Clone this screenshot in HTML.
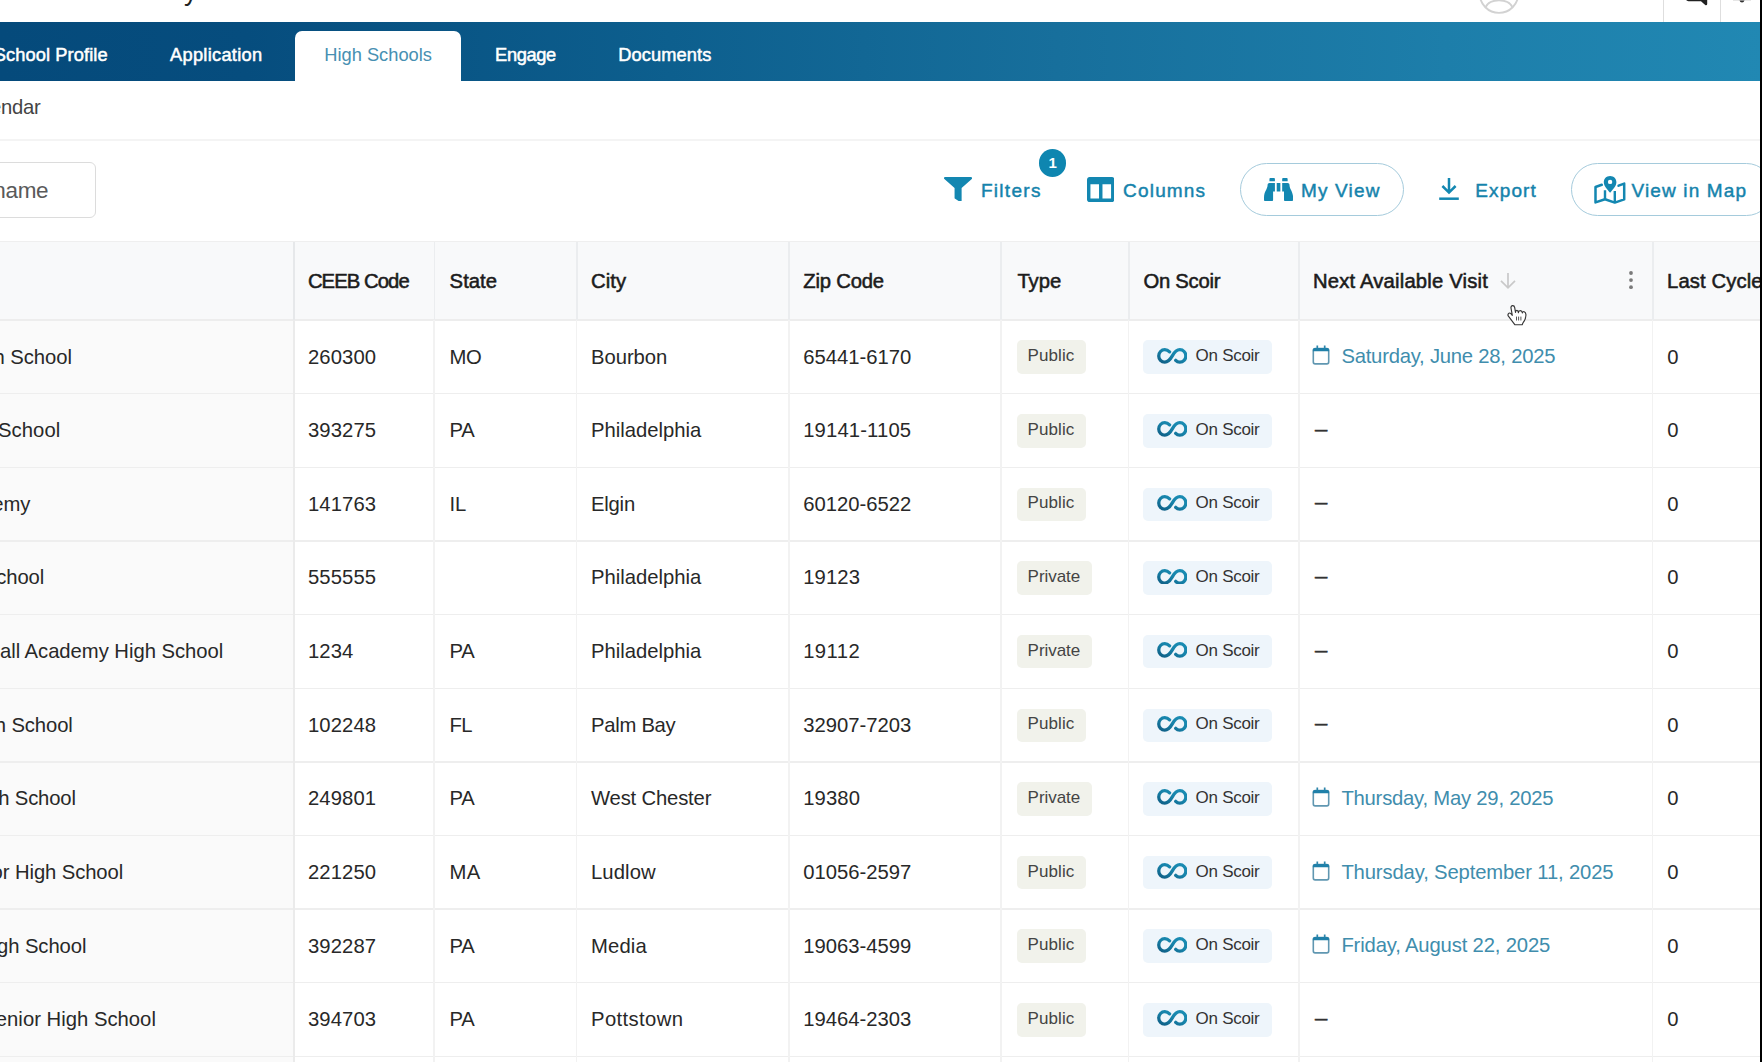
<!DOCTYPE html>
<html lang="en">
<head>
<meta charset="utf-8">
<title>Scoir University - High Schools</title>
<style>
*{box-sizing:border-box}
html,body{margin:0;padding:0}
body{width:1762px;height:1062px;overflow:hidden;position:relative;background:#fff;
  font-family:"Liberation Sans",sans-serif;color:#222}
.ab,.t,.bd,.hl,.vl{position:absolute}
.t{white-space:pre;line-height:1;display:block}
#topbar{position:absolute;left:0;top:0;width:1762px;height:22.6px;background:#fff;overflow:hidden}
#nav{position:absolute;left:0;top:22.45px;width:1762px;height:58.15px;
  background:linear-gradient(90deg,#054a7b 0%,#064d7e 14%,#0d5f8e 38%,#176f9c 60%,#1d7eaa 82%,#2188b3 100%)}
#tab{position:absolute;left:295.3px;top:30.8px;width:166px;height:50px;background:#fff;border-radius:7px 7px 0 0}
#sep{position:absolute;left:0;top:139px;width:1762px;height:1.6px;background:#f4f4f4}
#search{position:absolute;left:-260px;top:162.3px;width:356px;height:56px;border:1.5px solid #dcdcdc;border-radius:6px;background:#fff}
.pill{position:absolute;height:53.4px;top:162.9px;border:1.3px solid #a5cbdc;border-radius:27px;background:#fff}
#thead{position:absolute;left:0;top:240.6px;width:1762px;height:80.2px;background:#f8f9fa;border-top:1.6px solid #efefef}
#pin{position:absolute;left:0;top:320.8px;width:293.5px;height:742px;background:#fafafa}
.hl{left:0;width:1762px;height:1.4px;background:#eeeeee}
.vl{top:320px;width:1.6px;height:742px;background:#f2f2f2}
.vh{position:absolute;top:242px;width:1.6px;height:78px;background:#ebedef}
.bd{height:33.6px;border-radius:5px}
.ty{background:#f1f2eb}
.os{background:#eef5fb}
#edge{position:absolute;left:1760px;top:0;width:2px;height:1062px;background:#000}
#cnt{position:absolute;left:1038.7px;top:149.2px;width:27.8px;height:27.8px;border-radius:50%;background:#0e86b0}
</style>
</head>
<body>
<svg width="0" height="0" style="position:absolute" aria-hidden="true">
  <linearGradient id="ig" x1="0" y1="1" x2="1" y2="0">
    <stop offset="0" stop-color="#0f5f86"/><stop offset="0.55" stop-color="#1784ab"/><stop offset="1" stop-color="#1a8db4"/>
  </linearGradient>
</svg>

<!-- ======= top bar ======= -->
<div id="topbar">
  <svg class="ab" style="left:1478px;top:-27px" width="42" height="42" viewBox="0 0 42 42">
    <circle cx="21" cy="20.6" r="19.3" fill="none" stroke="#d2d2d2" stroke-width="1.9"/>
    <circle cx="21" cy="15" r="7" fill="none" stroke="#cfcfcf" stroke-width="1.6"/>
    <path d="M7.6 34 C10 29.4 15 27.4 21 27.4 C27 27.4 32 29.4 34.4 34" fill="none" stroke="#d2d2d2" stroke-width="1.9"/>
  </svg>
  <div class="ab" style="left:1663px;top:0;width:1.4px;height:23px;background:#dedede"></div>
  <div class="ab" style="left:1720px;top:0;width:1.4px;height:23px;background:#dedede"></div>
  <svg class="ab" style="left:1684px;top:-18px" width="26" height="24" viewBox="0 0 26 24">
    <path d="M4.6 0 H20 A2 2 0 0 1 22 2 V22 L17.5 18 H4.6 A2 2 0 0 1 2.8 16 V2 A2 2 0 0 1 4.6 0 Z" fill="none" stroke="#222" stroke-width="2.4" stroke-linejoin="round"/>
    <path d="M16.5 17.5 L22.6 22.9 V16 Z" fill="#222"/>
  </svg>
  <svg class="ab" style="left:1733px;top:-1px" width="18" height="6" viewBox="0 0 18 6">
    <rect x="0" y="0" width="18" height="1.6" fill="#d5d5d5"/>
    <path d="M6.5 1.5 A2.6 2.6 0 0 0 11.5 1.5 Z" fill="#333"/>
  </svg>
</div>

<!-- ======= nav ======= -->
<div id="nav"></div>
<div id="tab"></div>
<div id="sep"></div>

<!-- ======= toolbar ======= -->
<div id="search"></div>
<!-- filter icon -->
<svg class="ab" style="left:943.8px;top:176.6px" width="28.2" height="24.8" viewBox="0 0 512 512" preserveAspectRatio="none">
  <path fill="#1387b1" d="M487.976 0H24.028C2.71 0-8.047 25.866 7.058 40.971L192 225.941V432c0 7.831 3.821 15.17 10.237 19.662l80 55.98C298.02 518.69 320 507.493 320 487.98V225.941l184.947-184.97C520.021 25.896 509.338 0 487.976 0z"/>
</svg>
<div id="cnt"></div>
<!-- columns icon -->
<svg class="ab" style="left:1086.7px;top:176.7px" width="27.5" height="25.2" viewBox="0 32 512 448" preserveAspectRatio="none">
  <path fill="#1387b1" d="M464 32H48C21.49 32 0 53.49 0 80v352c0 26.51 21.49 48 48 48h416c26.51 0 48-21.49 48-48V80c0-26.51-21.49-48-48-48zM224 416H64V160h160v256zm224 0H288V160h160v256z"/>
</svg>
<!-- My View pill -->
<div class="pill" style="left:1240.2px;width:164.2px"></div>
<svg class="ab" style="left:1263.7px;top:177.6px" width="29.1" height="23.5" viewBox="0 32 512 448" preserveAspectRatio="none">
  <path fill="#1387b1" d="M416 48c0-8.84-7.16-16-16-16h-64c-8.84 0-16 7.16-16 16v48h96V48zM63.91 159.99C61.4 253.84 3.46 274.22 0 404v44c0 17.67 14.33 32 32 32h96c17.67 0 32-14.33 32-32V288h32V128H95.84c-17.63 0-31.45 14.37-31.93 31.99zm384.18 0c-.48-17.62-14.3-31.99-31.93-31.99H320v160h32v160c0 17.67 14.33 32 32 32h96c17.67 0 32-14.33 32-32v-44c-3.46-129.78-61.4-150.16-63.91-244.01zM176 32h-64c-8.84 0-16 7.16-16 16v48h96V48c0-8.84-7.16-16-16-16zm48 256h64V128h-64v160z"/>
</svg>
<!-- export icon -->
<svg class="ab" style="left:1437.6px;top:177.4px" width="22" height="24" viewBox="0 0 22 24">
  <path d="M11 1 V15.4 M4.4 9 L11 15.6 L17.6 9" fill="none" stroke="#1387b1" stroke-width="2.5" stroke-linejoin="miter"/>
  <path d="M1.2 21.7 H20.8" stroke="#1387b1" stroke-width="2.5"/>
</svg>
<!-- View in Map pill -->
<div class="pill" style="left:1570.8px;width:202px"></div>
<svg class="ab" style="left:1593.4px;top:174.6px" width="34" height="30" viewBox="0 0 34 30">
  <path d="M8.8 9.8 L2.5 12 V27.4 L12 24.2 L21.8 27.6 L31.2 24.4 V8.6 L25.6 10.7" fill="none" stroke="#1387b1" stroke-width="2.5" stroke-linejoin="round" stroke-linecap="round"/>
  <path d="M12 15.2 V24.2 M21.8 16 V27.2" fill="none" stroke="#1387b1" stroke-width="2.4"/>
  <path d="M17.1 1 C13.3 1 10.8 3.8 10.8 7.2 C10.8 10.8 14 14 17.1 17.8 C20.2 14 23.4 10.8 23.4 7.2 C23.4 3.8 20.9 1 17.1 1 Z M17.1 4.7 A2.2 2.2 0 1 1 17.1 9.1 A2.2 2.2 0 1 1 17.1 4.7 Z" fill="#1387b1" fill-rule="evenodd"/>
</svg>

<!-- ======= table ======= -->
<div id="thead"></div>
<div id="pin"></div>
<div class="hl" style="top:319.3px;background:#ededed"></div>
<div class="bd ty" style="left:1017px;top:340.40px;width:69.0px"></div>
<div class="bd os" style="left:1143.3px;top:340.40px;width:128.5px"></div>
<svg class="ab" style="left:1156.9px;top:347.75px" width="30.6" height="15.8" viewBox="0 0 30.6 16.3" preserveAspectRatio="none"><path d="M12.6 3.9 C11.3 2.6 9.7 1.75 7.8 1.75 C4.4 1.75 1.75 4.6 1.75 8.15 C1.75 11.7 4.4 14.55 7.8 14.55 C11 14.55 13 12.3 15.3 8.15 C17.6 4 19.6 1.75 22.8 1.75 C26.2 1.75 28.85 4.6 28.85 8.15 C28.85 11.7 26.2 14.55 22.8 14.55 C21.2 14.55 19.8 13.9 18.7 12.7" fill="none" stroke="url(#ig)" stroke-width="3.3" stroke-linecap="round"/></svg>
<svg class="ab" style="left:1312.0px;top:345.40px" width="18" height="20" viewBox="0 0 18 20"><path d="M3.1 3.5 H14.9 A1.8 1.8 0 0 1 16.7 5.3 V17.1 A1.8 1.8 0 0 1 14.9 18.9 H3.1 A1.8 1.8 0 0 1 1.3 17.1 V5.3 A1.8 1.8 0 0 1 3.1 3.5 Z" fill="none" stroke="#6097b1" stroke-width="1.6"/><path d="M0.9 6.3 V5.1 A2 2 0 0 1 2.9 3.1 H15.1 A2 2 0 0 1 17.1 5.1 V6.3 Z" fill="#1f80a9"/><path d="M5.3 0.4 V3.4 M12.7 0.4 V3.4" stroke="#2f86ab" stroke-width="1.7"/></svg>
<div class="hl" style="top:393.02px"></div>
<div class="bd ty" style="left:1017px;top:414.02px;width:69.0px"></div>
<div class="bd os" style="left:1143.3px;top:414.02px;width:128.5px"></div>
<svg class="ab" style="left:1156.9px;top:421.37px" width="30.6" height="15.8" viewBox="0 0 30.6 16.3" preserveAspectRatio="none"><path d="M12.6 3.9 C11.3 2.6 9.7 1.75 7.8 1.75 C4.4 1.75 1.75 4.6 1.75 8.15 C1.75 11.7 4.4 14.55 7.8 14.55 C11 14.55 13 12.3 15.3 8.15 C17.6 4 19.6 1.75 22.8 1.75 C26.2 1.75 28.85 4.6 28.85 8.15 C28.85 11.7 26.2 14.55 22.8 14.55 C21.2 14.55 19.8 13.9 18.7 12.7" fill="none" stroke="url(#ig)" stroke-width="3.3" stroke-linecap="round"/></svg>
<div class="hl" style="top:466.64px"></div>
<div class="bd ty" style="left:1017px;top:487.64px;width:69.0px"></div>
<div class="bd os" style="left:1143.3px;top:487.64px;width:128.5px"></div>
<svg class="ab" style="left:1156.9px;top:494.99px" width="30.6" height="15.8" viewBox="0 0 30.6 16.3" preserveAspectRatio="none"><path d="M12.6 3.9 C11.3 2.6 9.7 1.75 7.8 1.75 C4.4 1.75 1.75 4.6 1.75 8.15 C1.75 11.7 4.4 14.55 7.8 14.55 C11 14.55 13 12.3 15.3 8.15 C17.6 4 19.6 1.75 22.8 1.75 C26.2 1.75 28.85 4.6 28.85 8.15 C28.85 11.7 26.2 14.55 22.8 14.55 C21.2 14.55 19.8 13.9 18.7 12.7" fill="none" stroke="url(#ig)" stroke-width="3.3" stroke-linecap="round"/></svg>
<div class="hl" style="top:540.26px"></div>
<div class="bd ty" style="left:1017px;top:561.26px;width:74.5px"></div>
<div class="bd os" style="left:1143.3px;top:561.26px;width:128.5px"></div>
<svg class="ab" style="left:1156.9px;top:568.61px" width="30.6" height="15.8" viewBox="0 0 30.6 16.3" preserveAspectRatio="none"><path d="M12.6 3.9 C11.3 2.6 9.7 1.75 7.8 1.75 C4.4 1.75 1.75 4.6 1.75 8.15 C1.75 11.7 4.4 14.55 7.8 14.55 C11 14.55 13 12.3 15.3 8.15 C17.6 4 19.6 1.75 22.8 1.75 C26.2 1.75 28.85 4.6 28.85 8.15 C28.85 11.7 26.2 14.55 22.8 14.55 C21.2 14.55 19.8 13.9 18.7 12.7" fill="none" stroke="url(#ig)" stroke-width="3.3" stroke-linecap="round"/></svg>
<div class="hl" style="top:613.88px"></div>
<div class="bd ty" style="left:1017px;top:634.88px;width:74.5px"></div>
<div class="bd os" style="left:1143.3px;top:634.88px;width:128.5px"></div>
<svg class="ab" style="left:1156.9px;top:642.23px" width="30.6" height="15.8" viewBox="0 0 30.6 16.3" preserveAspectRatio="none"><path d="M12.6 3.9 C11.3 2.6 9.7 1.75 7.8 1.75 C4.4 1.75 1.75 4.6 1.75 8.15 C1.75 11.7 4.4 14.55 7.8 14.55 C11 14.55 13 12.3 15.3 8.15 C17.6 4 19.6 1.75 22.8 1.75 C26.2 1.75 28.85 4.6 28.85 8.15 C28.85 11.7 26.2 14.55 22.8 14.55 C21.2 14.55 19.8 13.9 18.7 12.7" fill="none" stroke="url(#ig)" stroke-width="3.3" stroke-linecap="round"/></svg>
<div class="hl" style="top:687.50px"></div>
<div class="bd ty" style="left:1017px;top:708.50px;width:69.0px"></div>
<div class="bd os" style="left:1143.3px;top:708.50px;width:128.5px"></div>
<svg class="ab" style="left:1156.9px;top:715.85px" width="30.6" height="15.8" viewBox="0 0 30.6 16.3" preserveAspectRatio="none"><path d="M12.6 3.9 C11.3 2.6 9.7 1.75 7.8 1.75 C4.4 1.75 1.75 4.6 1.75 8.15 C1.75 11.7 4.4 14.55 7.8 14.55 C11 14.55 13 12.3 15.3 8.15 C17.6 4 19.6 1.75 22.8 1.75 C26.2 1.75 28.85 4.6 28.85 8.15 C28.85 11.7 26.2 14.55 22.8 14.55 C21.2 14.55 19.8 13.9 18.7 12.7" fill="none" stroke="url(#ig)" stroke-width="3.3" stroke-linecap="round"/></svg>
<div class="hl" style="top:761.12px"></div>
<div class="bd ty" style="left:1017px;top:782.12px;width:74.5px"></div>
<div class="bd os" style="left:1143.3px;top:782.12px;width:128.5px"></div>
<svg class="ab" style="left:1156.9px;top:789.47px" width="30.6" height="15.8" viewBox="0 0 30.6 16.3" preserveAspectRatio="none"><path d="M12.6 3.9 C11.3 2.6 9.7 1.75 7.8 1.75 C4.4 1.75 1.75 4.6 1.75 8.15 C1.75 11.7 4.4 14.55 7.8 14.55 C11 14.55 13 12.3 15.3 8.15 C17.6 4 19.6 1.75 22.8 1.75 C26.2 1.75 28.85 4.6 28.85 8.15 C28.85 11.7 26.2 14.55 22.8 14.55 C21.2 14.55 19.8 13.9 18.7 12.7" fill="none" stroke="url(#ig)" stroke-width="3.3" stroke-linecap="round"/></svg>
<svg class="ab" style="left:1312.0px;top:787.12px" width="18" height="20" viewBox="0 0 18 20"><path d="M3.1 3.5 H14.9 A1.8 1.8 0 0 1 16.7 5.3 V17.1 A1.8 1.8 0 0 1 14.9 18.9 H3.1 A1.8 1.8 0 0 1 1.3 17.1 V5.3 A1.8 1.8 0 0 1 3.1 3.5 Z" fill="none" stroke="#6097b1" stroke-width="1.6"/><path d="M0.9 6.3 V5.1 A2 2 0 0 1 2.9 3.1 H15.1 A2 2 0 0 1 17.1 5.1 V6.3 Z" fill="#1f80a9"/><path d="M5.3 0.4 V3.4 M12.7 0.4 V3.4" stroke="#2f86ab" stroke-width="1.7"/></svg>
<div class="hl" style="top:834.74px"></div>
<div class="bd ty" style="left:1017px;top:855.74px;width:69.0px"></div>
<div class="bd os" style="left:1143.3px;top:855.74px;width:128.5px"></div>
<svg class="ab" style="left:1156.9px;top:863.09px" width="30.6" height="15.8" viewBox="0 0 30.6 16.3" preserveAspectRatio="none"><path d="M12.6 3.9 C11.3 2.6 9.7 1.75 7.8 1.75 C4.4 1.75 1.75 4.6 1.75 8.15 C1.75 11.7 4.4 14.55 7.8 14.55 C11 14.55 13 12.3 15.3 8.15 C17.6 4 19.6 1.75 22.8 1.75 C26.2 1.75 28.85 4.6 28.85 8.15 C28.85 11.7 26.2 14.55 22.8 14.55 C21.2 14.55 19.8 13.9 18.7 12.7" fill="none" stroke="url(#ig)" stroke-width="3.3" stroke-linecap="round"/></svg>
<svg class="ab" style="left:1312.0px;top:860.74px" width="18" height="20" viewBox="0 0 18 20"><path d="M3.1 3.5 H14.9 A1.8 1.8 0 0 1 16.7 5.3 V17.1 A1.8 1.8 0 0 1 14.9 18.9 H3.1 A1.8 1.8 0 0 1 1.3 17.1 V5.3 A1.8 1.8 0 0 1 3.1 3.5 Z" fill="none" stroke="#6097b1" stroke-width="1.6"/><path d="M0.9 6.3 V5.1 A2 2 0 0 1 2.9 3.1 H15.1 A2 2 0 0 1 17.1 5.1 V6.3 Z" fill="#1f80a9"/><path d="M5.3 0.4 V3.4 M12.7 0.4 V3.4" stroke="#2f86ab" stroke-width="1.7"/></svg>
<div class="hl" style="top:908.36px"></div>
<div class="bd ty" style="left:1017px;top:929.36px;width:69.0px"></div>
<div class="bd os" style="left:1143.3px;top:929.36px;width:128.5px"></div>
<svg class="ab" style="left:1156.9px;top:936.71px" width="30.6" height="15.8" viewBox="0 0 30.6 16.3" preserveAspectRatio="none"><path d="M12.6 3.9 C11.3 2.6 9.7 1.75 7.8 1.75 C4.4 1.75 1.75 4.6 1.75 8.15 C1.75 11.7 4.4 14.55 7.8 14.55 C11 14.55 13 12.3 15.3 8.15 C17.6 4 19.6 1.75 22.8 1.75 C26.2 1.75 28.85 4.6 28.85 8.15 C28.85 11.7 26.2 14.55 22.8 14.55 C21.2 14.55 19.8 13.9 18.7 12.7" fill="none" stroke="url(#ig)" stroke-width="3.3" stroke-linecap="round"/></svg>
<svg class="ab" style="left:1312.0px;top:934.36px" width="18" height="20" viewBox="0 0 18 20"><path d="M3.1 3.5 H14.9 A1.8 1.8 0 0 1 16.7 5.3 V17.1 A1.8 1.8 0 0 1 14.9 18.9 H3.1 A1.8 1.8 0 0 1 1.3 17.1 V5.3 A1.8 1.8 0 0 1 3.1 3.5 Z" fill="none" stroke="#6097b1" stroke-width="1.6"/><path d="M0.9 6.3 V5.1 A2 2 0 0 1 2.9 3.1 H15.1 A2 2 0 0 1 17.1 5.1 V6.3 Z" fill="#1f80a9"/><path d="M5.3 0.4 V3.4 M12.7 0.4 V3.4" stroke="#2f86ab" stroke-width="1.7"/></svg>
<div class="hl" style="top:981.98px"></div>
<div class="bd ty" style="left:1017px;top:1002.98px;width:69.0px"></div>
<div class="bd os" style="left:1143.3px;top:1002.98px;width:128.5px"></div>
<svg class="ab" style="left:1156.9px;top:1010.33px" width="30.6" height="15.8" viewBox="0 0 30.6 16.3" preserveAspectRatio="none"><path d="M12.6 3.9 C11.3 2.6 9.7 1.75 7.8 1.75 C4.4 1.75 1.75 4.6 1.75 8.15 C1.75 11.7 4.4 14.55 7.8 14.55 C11 14.55 13 12.3 15.3 8.15 C17.6 4 19.6 1.75 22.8 1.75 C26.2 1.75 28.85 4.6 28.85 8.15 C28.85 11.7 26.2 14.55 22.8 14.55 C21.2 14.55 19.8 13.9 18.7 12.7" fill="none" stroke="url(#ig)" stroke-width="3.3" stroke-linecap="round"/></svg>
<div class="hl" style="top:1055.60px"></div>
<div class="vl" style="left:292.7px;width:2px;background:#ebebeb"></div><div class="vh" style="left:292.7px;width:2px;background:#e6e8ea"></div>
<div class="vl" style="left:433.3px"></div><div class="vh" style="left:433.5px"></div>
<div class="vl" style="left:575.8px"></div><div class="vh" style="left:576.0px"></div>
<div class="vl" style="left:788.0px"></div><div class="vh" style="left:788.2px"></div>
<div class="vl" style="left:1000.1px"></div><div class="vh" style="left:1000.3px"></div>
<div class="vl" style="left:1127.9px"></div><div class="vh" style="left:1128.1px"></div>
<div class="vl" style="left:1298.1px"></div><div class="vh" style="left:1298.3px"></div>
<div class="vl" style="left:1651.9px"></div><div class="vh" style="left:1652.1px"></div>

<!-- sort arrow -->
<svg class="ab" style="left:1499.4px;top:272px" width="18" height="18" viewBox="0 0 18 18">
  <path d="M9 1 V15.6 M2 8.8 L9 15.8 L16 8.8" fill="none" stroke="#c9c9c9" stroke-width="1.7"/>
</svg>
<!-- column menu dots -->
<svg class="ab" style="left:1627.6px;top:270.4px" width="6" height="21" viewBox="0 0 6 21">
  <circle cx="3" cy="3" r="1.9" fill="#7a7a7a"/><circle cx="3" cy="10.1" r="1.9" fill="#7a7a7a"/><circle cx="3" cy="17.2" r="1.9" fill="#7a7a7a"/>
</svg>

<span class="t" style="top:-22.50px;font-size:27px;color:#222;letter-spacing:-0.131px;right:1564.53px;">Scoir University</span>
<span class="t" style="top:46.38px;font-size:18.25px;color:#fff;letter-spacing:0.095px;-webkit-text-stroke:0.5px #fff;right:1654.31px;">School Profile</span>
<span class="t" style="top:46.38px;font-size:18.25px;color:#fff;letter-spacing:0.281px;-webkit-text-stroke:0.5px #fff;left:170.00px;">Application</span>
<span class="t" style="top:46.35px;font-size:18.3px;color:#4790b2;letter-spacing:-0.010px;left:324.30px;">High Schools</span>
<span class="t" style="top:46.38px;font-size:18.25px;color:#fff;letter-spacing:-0.357px;-webkit-text-stroke:0.5px #fff;left:495.10px;">Engage</span>
<span class="t" style="top:46.38px;font-size:18.25px;color:#fff;letter-spacing:0.104px;-webkit-text-stroke:0.5px #fff;left:618.20px;">Documents</span>
<span class="t" style="top:96.88px;font-size:20.25px;color:#444;letter-spacing:-0.230px;right:1721.43px;">Calendar</span>
<span class="t" style="top:180.25px;font-size:22.5px;color:#5a5a5a;letter-spacing:-0.291px;right:1713.69px;">Search by name</span>
<span class="t" style="top:181.00px;font-size:19.0px;color:#1583ac;letter-spacing:1.304px;-webkit-text-stroke:0.45px #1583ac;left:980.90px;">Filters</span>
<span class="t" style="top:181.00px;font-size:19.0px;color:#1583ac;letter-spacing:1.174px;-webkit-text-stroke:0.45px #1583ac;left:1123.10px;">Columns</span>
<span class="t" style="top:181.00px;font-size:19.0px;color:#1583ac;letter-spacing:1.183px;-webkit-text-stroke:0.45px #1583ac;left:1300.90px;">My View</span>
<span class="t" style="top:181.00px;font-size:19.0px;color:#1583ac;letter-spacing:1.156px;-webkit-text-stroke:0.45px #1583ac;left:1475.20px;">Export</span>
<span class="t" style="top:181.00px;font-size:19.0px;color:#1583ac;letter-spacing:1.158px;-webkit-text-stroke:0.45px #1583ac;left:1631.40px;">View in Map</span>
<span class="t" style="top:270.88px;font-size:20.25px;color:#1c1c1c;letter-spacing:-0.922px;-webkit-text-stroke:0.55px #1c1c1c;left:307.90px;">CEEB Code</span>
<span class="t" style="top:270.88px;font-size:20.25px;color:#1c1c1c;letter-spacing:0.044px;-webkit-text-stroke:0.55px #1c1c1c;left:449.60px;">State</span>
<span class="t" style="top:270.88px;font-size:20.25px;color:#1c1c1c;letter-spacing:0.043px;-webkit-text-stroke:0.55px #1c1c1c;left:591.00px;">City</span>
<span class="t" style="top:270.88px;font-size:20.25px;color:#1c1c1c;letter-spacing:-0.176px;-webkit-text-stroke:0.55px #1c1c1c;left:803.20px;">Zip Code</span>
<span class="t" style="top:270.88px;font-size:20.25px;color:#1c1c1c;letter-spacing:-0.039px;-webkit-text-stroke:0.55px #1c1c1c;left:1017.40px;">Type</span>
<span class="t" style="top:270.88px;font-size:20.25px;color:#1c1c1c;letter-spacing:-0.234px;-webkit-text-stroke:0.55px #1c1c1c;left:1143.40px;">On Scoir</span>
<span class="t" style="top:270.88px;font-size:20.25px;color:#1c1c1c;letter-spacing:0.184px;-webkit-text-stroke:0.55px #1c1c1c;left:1312.90px;">Next Available Visit</span>
<span class="t" style="top:270.88px;font-size:20.25px;color:#1c1c1c;letter-spacing:0.117px;-webkit-text-stroke:0.55px #1c1c1c;left:1667.00px;">Last Cycle Applicants</span>
<span class="t" style="top:346.88px;font-size:20.25px;color:#282828;letter-spacing:-0.071px;right:1690.17px;">Bourbon High School</span>
<span class="t" style="top:346.88px;font-size:20.25px;color:#282828;letter-spacing:0.120px;left:307.90px;">260300</span>
<span class="t" style="top:346.88px;font-size:20.25px;color:#282828;letter-spacing:-0.500px;left:449.60px;">MO</span>
<span class="t" style="top:346.88px;font-size:20.25px;color:#282828;letter-spacing:-0.038px;left:591.00px;">Bourbon</span>
<span class="t" style="top:346.88px;font-size:20.25px;color:#282828;letter-spacing:-0.008px;left:803.20px;">65441-6170</span>
<span class="t" style="top:347.00px;font-size:17px;color:#444;letter-spacing:0.083px;left:1027.60px;">Public</span>
<span class="t" style="top:347.00px;font-size:17px;color:#333;letter-spacing:-0.281px;left:1195.60px;">On Scoir</span>
<span class="t" style="top:345.88px;font-size:20.25px;color:#408dad;letter-spacing:-0.230px;left:1341.40px;">Saturday, June 28, 2025</span>
<span class="t" style="top:346.88px;font-size:20.25px;color:#282828;letter-spacing:0.125px;left:1667.30px;">0</span>
<span class="t" style="top:419.88px;font-size:20.25px;color:#282828;letter-spacing:0.052px;right:1701.75px;">Northeast High School</span>
<span class="t" style="top:419.88px;font-size:20.25px;color:#282828;letter-spacing:0.120px;left:307.90px;">393275</span>
<span class="t" style="top:419.88px;font-size:20.25px;color:#282828;letter-spacing:-0.445px;left:449.60px;">PA</span>
<span class="t" style="top:419.88px;font-size:20.25px;color:#282828;left:591.00px;">Philadelphia</span>
<span class="t" style="top:419.88px;font-size:20.25px;color:#282828;letter-spacing:0.142px;left:803.20px;">19141-1105</span>
<span class="t" style="top:421.00px;font-size:17px;color:#444;letter-spacing:0.083px;left:1027.60px;">Public</span>
<span class="t" style="top:421.00px;font-size:17px;color:#333;letter-spacing:-0.281px;left:1195.60px;">On Scoir</span>
<span class="t" style="top:419.00px;font-size:20px;color:#333;-webkit-text-stroke:0.5px #333;left:1314.70px;transform:scaleX(1.106);transform-origin:0 50%;">–</span>
<span class="t" style="top:419.88px;font-size:20.25px;color:#282828;letter-spacing:0.125px;left:1667.30px;">0</span>
<span class="t" style="top:493.88px;font-size:20.25px;color:#282828;letter-spacing:-0.082px;right:1731.68px;">Elgin Math and Science Academy</span>
<span class="t" style="top:493.88px;font-size:20.25px;color:#282828;letter-spacing:0.120px;left:307.90px;">141763</span>
<span class="t" style="top:493.88px;font-size:20.25px;color:#282828;letter-spacing:-0.234px;left:449.60px;">IL</span>
<span class="t" style="top:493.88px;font-size:20.25px;color:#282828;letter-spacing:-0.222px;left:591.00px;">Elgin</span>
<span class="t" style="top:493.88px;font-size:20.25px;color:#282828;letter-spacing:-0.008px;left:803.20px;">60120-6522</span>
<span class="t" style="top:494.00px;font-size:17px;color:#444;letter-spacing:0.083px;left:1027.60px;">Public</span>
<span class="t" style="top:494.00px;font-size:17px;color:#333;letter-spacing:-0.281px;left:1195.60px;">On Scoir</span>
<span class="t" style="top:492.00px;font-size:20px;color:#333;-webkit-text-stroke:0.5px #333;left:1314.70px;transform:scaleX(1.106);transform-origin:0 50%;">–</span>
<span class="t" style="top:493.88px;font-size:20.25px;color:#282828;letter-spacing:0.125px;left:1667.30px;">0</span>
<span class="t" style="top:566.88px;font-size:20.25px;color:#282828;letter-spacing:-0.116px;right:1717.92px;">Scoir Demo High School</span>
<span class="t" style="top:566.88px;font-size:20.25px;color:#282828;letter-spacing:0.120px;left:307.90px;">555555</span>
<span class="t" style="top:566.88px;font-size:20.25px;color:#282828;left:591.00px;">Philadelphia</span>
<span class="t" style="top:566.88px;font-size:20.25px;color:#282828;letter-spacing:0.119px;left:803.20px;">19123</span>
<span class="t" style="top:568.00px;font-size:17px;color:#444;letter-spacing:-0.051px;left:1027.60px;">Private</span>
<span class="t" style="top:568.00px;font-size:17px;color:#333;letter-spacing:-0.281px;left:1195.60px;">On Scoir</span>
<span class="t" style="top:566.00px;font-size:20px;color:#333;-webkit-text-stroke:0.5px #333;left:1314.70px;transform:scaleX(1.106);transform-origin:0 50%;">–</span>
<span class="t" style="top:566.88px;font-size:20.25px;color:#282828;letter-spacing:0.125px;left:1667.30px;">0</span>
<span class="t" style="top:640.88px;font-size:20.25px;color:#282828;letter-spacing:-0.034px;right:1538.83px;">Scoir Hall Academy High School</span>
<span class="t" style="top:640.88px;font-size:20.25px;color:#282828;letter-spacing:0.117px;left:307.90px;">1234</span>
<span class="t" style="top:640.88px;font-size:20.25px;color:#282828;letter-spacing:-0.445px;left:449.60px;">PA</span>
<span class="t" style="top:640.88px;font-size:20.25px;color:#282828;left:591.00px;">Philadelphia</span>
<span class="t" style="top:640.88px;font-size:20.25px;color:#282828;letter-spacing:0.419px;left:803.20px;">19112</span>
<span class="t" style="top:642.00px;font-size:17px;color:#444;letter-spacing:-0.051px;left:1027.60px;">Private</span>
<span class="t" style="top:642.00px;font-size:17px;color:#333;letter-spacing:-0.281px;left:1195.60px;">On Scoir</span>
<span class="t" style="top:640.00px;font-size:20px;color:#333;-webkit-text-stroke:0.5px #333;left:1314.70px;transform:scaleX(1.106);transform-origin:0 50%;">–</span>
<span class="t" style="top:640.88px;font-size:20.25px;color:#282828;letter-spacing:0.125px;left:1667.30px;">0</span>
<span class="t" style="top:714.88px;font-size:20.25px;color:#282828;letter-spacing:-0.104px;right:1689.30px;">Palm Bay Magnet High School</span>
<span class="t" style="top:714.88px;font-size:20.25px;color:#282828;letter-spacing:0.120px;left:307.90px;">102248</span>
<span class="t" style="top:714.88px;font-size:20.25px;color:#282828;letter-spacing:-0.766px;left:449.60px;">FL</span>
<span class="t" style="top:714.88px;font-size:20.25px;color:#282828;letter-spacing:-0.275px;left:591.00px;">Palm Bay</span>
<span class="t" style="top:714.88px;font-size:20.25px;color:#282828;letter-spacing:-0.008px;left:803.20px;">32907-7203</span>
<span class="t" style="top:715.00px;font-size:17px;color:#444;letter-spacing:0.083px;left:1027.60px;">Public</span>
<span class="t" style="top:715.00px;font-size:17px;color:#333;letter-spacing:-0.281px;left:1195.60px;">On Scoir</span>
<span class="t" style="top:713.00px;font-size:20px;color:#333;-webkit-text-stroke:0.5px #333;left:1314.70px;transform:scaleX(1.106);transform-origin:0 50%;">–</span>
<span class="t" style="top:714.88px;font-size:20.25px;color:#282828;letter-spacing:0.125px;left:1667.30px;">0</span>
<span class="t" style="top:787.88px;font-size:20.25px;color:#282828;letter-spacing:-0.161px;right:1686.26px;">West Chester East High School</span>
<span class="t" style="top:787.88px;font-size:20.25px;color:#282828;letter-spacing:0.120px;left:307.90px;">249801</span>
<span class="t" style="top:787.88px;font-size:20.25px;color:#282828;letter-spacing:-0.445px;left:449.60px;">PA</span>
<span class="t" style="top:787.88px;font-size:20.25px;color:#282828;letter-spacing:-0.171px;left:591.00px;">West Chester</span>
<span class="t" style="top:787.88px;font-size:20.25px;color:#282828;letter-spacing:0.119px;left:803.20px;">19380</span>
<span class="t" style="top:789.00px;font-size:17px;color:#444;letter-spacing:-0.051px;left:1027.60px;">Private</span>
<span class="t" style="top:789.00px;font-size:17px;color:#333;letter-spacing:-0.281px;left:1195.60px;">On Scoir</span>
<span class="t" style="top:787.88px;font-size:20.25px;color:#408dad;letter-spacing:-0.222px;left:1341.40px;">Thursday, May 29, 2025</span>
<span class="t" style="top:787.88px;font-size:20.25px;color:#282828;letter-spacing:0.125px;left:1667.30px;">0</span>
<span class="t" style="top:861.88px;font-size:20.25px;color:#282828;letter-spacing:-0.094px;right:1638.89px;">Ludlow Senior High School</span>
<span class="t" style="top:861.88px;font-size:20.25px;color:#282828;letter-spacing:0.120px;left:307.90px;">221250</span>
<span class="t" style="top:861.88px;font-size:20.25px;color:#282828;letter-spacing:0.352px;left:449.60px;">MA</span>
<span class="t" style="top:861.88px;font-size:20.25px;color:#282828;letter-spacing:0.096px;left:591.00px;">Ludlow</span>
<span class="t" style="top:861.88px;font-size:20.25px;color:#282828;letter-spacing:-0.008px;left:803.20px;">01056-2597</span>
<span class="t" style="top:863.00px;font-size:17px;color:#444;letter-spacing:0.083px;left:1027.60px;">Public</span>
<span class="t" style="top:863.00px;font-size:17px;color:#333;letter-spacing:-0.281px;left:1195.60px;">On Scoir</span>
<span class="t" style="top:861.88px;font-size:20.25px;color:#408dad;letter-spacing:-0.146px;left:1341.40px;">Thursday, September 11, 2025</span>
<span class="t" style="top:861.88px;font-size:20.25px;color:#282828;letter-spacing:0.125px;left:1667.30px;">0</span>
<span class="t" style="top:935.88px;font-size:20.25px;color:#282828;letter-spacing:-0.068px;right:1675.57px;">Penncrest High School</span>
<span class="t" style="top:935.88px;font-size:20.25px;color:#282828;letter-spacing:0.120px;left:307.90px;">392287</span>
<span class="t" style="top:935.88px;font-size:20.25px;color:#282828;letter-spacing:-0.445px;left:449.60px;">PA</span>
<span class="t" style="top:935.88px;font-size:20.25px;color:#282828;letter-spacing:0.125px;left:591.00px;">Media</span>
<span class="t" style="top:935.88px;font-size:20.25px;color:#282828;letter-spacing:-0.008px;left:803.20px;">19063-4599</span>
<span class="t" style="top:936.00px;font-size:17px;color:#444;letter-spacing:0.083px;left:1027.60px;">Public</span>
<span class="t" style="top:936.00px;font-size:17px;color:#333;letter-spacing:-0.281px;left:1195.60px;">On Scoir</span>
<span class="t" style="top:934.88px;font-size:20.25px;color:#408dad;letter-spacing:-0.159px;left:1341.40px;">Friday, August 22, 2025</span>
<span class="t" style="top:935.88px;font-size:20.25px;color:#282828;letter-spacing:0.125px;left:1667.30px;">0</span>
<span class="t" style="top:1008.88px;font-size:20.25px;color:#282828;letter-spacing:0.015px;right:1606.09px;">Pottstown Senior High School</span>
<span class="t" style="top:1008.88px;font-size:20.25px;color:#282828;letter-spacing:0.120px;left:307.90px;">394703</span>
<span class="t" style="top:1008.88px;font-size:20.25px;color:#282828;letter-spacing:-0.445px;left:449.60px;">PA</span>
<span class="t" style="top:1008.88px;font-size:20.25px;color:#282828;letter-spacing:0.373px;left:591.00px;">Pottstown</span>
<span class="t" style="top:1008.88px;font-size:20.25px;color:#282828;letter-spacing:-0.008px;left:803.20px;">19464-2303</span>
<span class="t" style="top:1010.00px;font-size:17px;color:#444;letter-spacing:0.083px;left:1027.60px;">Public</span>
<span class="t" style="top:1010.00px;font-size:17px;color:#333;letter-spacing:-0.281px;left:1195.60px;">On Scoir</span>
<span class="t" style="top:1008.00px;font-size:20px;color:#333;-webkit-text-stroke:0.5px #333;left:1314.70px;transform:scaleX(1.106);transform-origin:0 50%;">–</span>
<span class="t" style="top:1008.88px;font-size:20.25px;color:#282828;letter-spacing:0.125px;left:1667.30px;">0</span>
<span class="t" style="left:1048.4px;top:155.4px;font-size:15px;font-weight:700;color:#fff">1</span>

<!-- hand cursor -->
<svg class="ab" style="left:1506px;top:304px" width="22" height="23" viewBox="-1 -1 22 23">
  <path d="M5.3 10.3 L4 3 C3.6 0.1 7.2 -0.3 7.7 2.6 L8.5 7.4 C8.6 4.8 11.2 4.6 11.4 7.6 C11.6 4.9 15 4.9 15.4 7.9 C15.6 6 18.6 6.2 18.9 9.4 C19.2 13 17.8 15.5 15.9 18 L15.2 19.7 L7.8 19.7 L1.4 11.2 C0.2 9.4 2 6.8 3.9 8.6 Z" fill="#fff" stroke="#363636" stroke-width="1.15" stroke-linejoin="round"/>
  <path d="M9.5 11.6 V15.5 M11.6 11.6 V15.5 M13.9 11.6 V15.5" stroke="#444" stroke-width="0.9"/>
</svg>

<div id="edge"></div>
</body>
</html>
